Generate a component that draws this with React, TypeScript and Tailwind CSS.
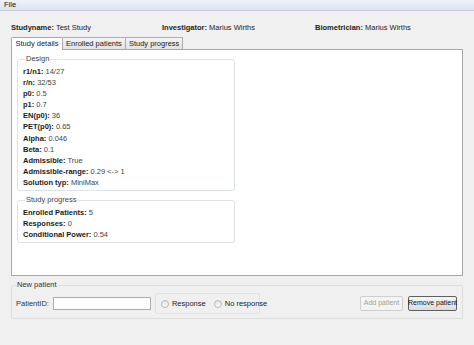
import React from 'react'

const design: [string, string][] = [
  ['r1/n1', '14/27'],
  ['r/n', '32/53'],
  ['p0', '0.5'],
  ['p1', '0.7'],
  ['EN(p0)', '36'],
  ['PET(p0)', '0.65'],
  ['Alpha', '0.046'],
  ['Beta', '0.1'],
  ['Admissible', 'True'],
  ['Admissible-range', '0.29 <-> 1'],
  ['Solution typ', 'MiniMax'],
]

const progress: [string, string][] = [
  ['Enrolled Patients', '5'],
  ['Responses', '0'],
  ['Conditional Power', '0.54'],
]

function Field({ k, v }: { k: string; v: string }) {
  return (
    <div className="h-[11.1px] leading-[11px] whitespace-nowrap">
      <span className="font-bold text-[#1a1a1a]">{k}:</span> <span className="text-[#444]">{v}</span>
    </div>
  )
}

function Group({ title, rows, className }: { title: string; rows: [string, string][]; className: string }) {
  return (
    <fieldset className={`border border-[#dde3e8] rounded-[3px] pl-[5px] pt-[3px] ${className}`}>
      <legend className="ml-[2px] px-[1px] text-[#444] leading-[8px]">{title}</legend>
      {rows.map(([k, v]) => <Field key={k} k={k} v={v} />)}
    </fieldset>
  )
}

function Radio({ label }: { label: string }) {
  return (
    <div className="flex items-center gap-[3px] whitespace-nowrap">
      <span className="w-[8px] h-[8px] shrink-0 rounded-full border border-[#b8b8b8] bg-gradient-to-b from-[#e4e4e4] to-[#fafafa]" />
      <span className="text-[#222]">{label}</span>
    </div>
  )
}

export default function App() {
  const tabs = ['Study details', 'Enrolled patients', 'Study progress']
  return (
    <div className="w-[474px] h-[345px] bg-[#f0f0f0] overflow-hidden text-[7.5px] text-[#222] flex flex-col" style={{ fontFamily: '"Liberation Sans", Arial, sans-serif' }}>
      <div className="h-[11px] shrink-0 bg-gradient-to-b from-[#eef2fa] to-[#dbe3f1] border-b border-[#c5ccd9] pl-[4px] leading-[9px] text-[#111]">File</div>

      <div className="mt-[12px] pl-[11px] grid grid-cols-[151px_153px_1fr] h-[9px] leading-[9px] whitespace-nowrap">
        <div><span className="font-bold">Studyname:</span> Test Study</div>
        <div><span className="font-bold">Investigator:</span> Marius Wirths</div>
        <div><span className="font-bold">Biometrician:</span> Marius Wirths</div>
      </div>

      <div className="mt-[4px] ml-[11px] flex items-end h-[13px] whitespace-nowrap">
        {tabs.map((t, i) => (
          <div
            key={t}
            className={
              i === 0
                ? 'h-[13px] w-[52px] bg-white border border-[#a8a8a8] border-b-0 rounded-t-[2px] flex items-center justify-center relative top-[1px] z-10'
                : 'h-[12px] px-[3px] bg-gradient-to-b from-[#f4f4f4] to-[#e2e2e2] border border-[#adadad] border-l-0 border-b-0 flex items-center'
            }
          >
            {t}
          </div>
        ))}
      </div>

      <div className="ml-[11px] w-[452px] h-[227px] shrink-0 bg-white border border-[#a8a8a8] pl-[5px] pt-[5px] flex flex-col">
        <Group title="Design" rows={design} className="w-[218px] h-[136px]" />
        <Group title="Study progress" rows={progress} className="w-[218px] h-[47px] mt-[5px]" />
      </div>

      <fieldset className="mt-[5px] ml-[11px] w-[452px] h-[38px] border border-[#dedede] rounded-[2px] pl-[4px] flex">
        <legend className="ml-[1px] text-[#333] leading-[8px]">New patient</legend>
        <div className="flex items-center w-full pr-[4px] pt-[4px] whitespace-nowrap">
          <span className="text-[#333]">PatientID:</span>
          <div className="ml-[4px] w-[98px] h-[13px] bg-white border border-[#abadb3]" />
          <div className="ml-[4px] h-[21px] w-[105px] border border-[#e2e2e2] rounded-[2px] flex items-center gap-[8px] pl-[5px]">
            <Radio label="Response" />
            <Radio label="No response" />
          </div>
          <div className="ml-auto mr-[1px] flex gap-[5px] text-[7px]">
            <div className="h-[15px] w-[43px] border border-[#cfcfcf] bg-[#f4f4f4] rounded-[2px] flex items-center justify-center text-[#a0a0a0]">Add patient</div>
            <div className="h-[15px] w-[49px] border border-[#606060] bg-gradient-to-b from-[#f6f6f6] to-[#dcdcdc] rounded-[2px] flex items-center justify-center text-[#111]">Remove patient</div>
          </div>
        </div>
      </fieldset>
    </div>
  )
}
